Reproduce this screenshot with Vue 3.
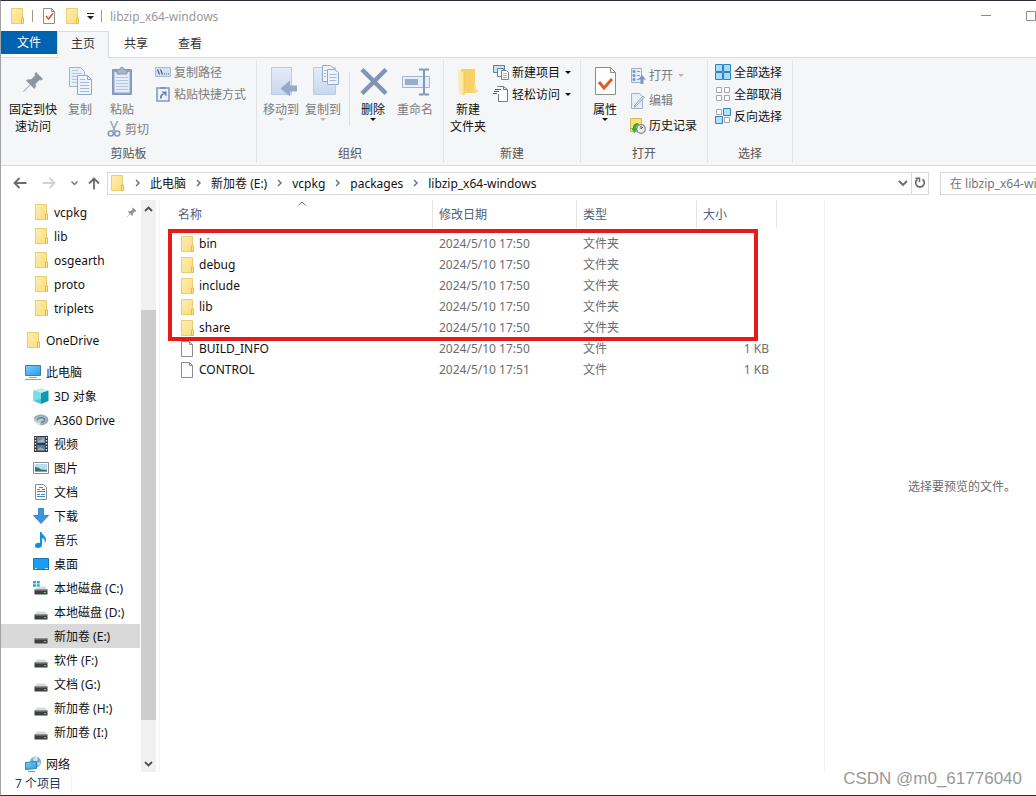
<template>
  <svg class="sprite" aria-hidden="true">
    <defs>
      <linearGradient id="g-folder" x1="0" y1="0" x2="1" y2="1">
        <stop offset="0" stop-color="#ffeeb0" />
        <stop offset="1" stop-color="#fbdc7c" />
      </linearGradient>
      <linearGradient id="g-blue" x1="0" y1="0" x2="1" y2="1">
        <stop offset="0" stop-color="#7cd0fb" />
        <stop offset="1" stop-color="#1e9bf0" />
      </linearGradient>
      <linearGradient id="g-pale" x1="0" y1="0" x2="0" y2="1">
        <stop offset="0" stop-color="#e3ecf8" />
        <stop offset="1" stop-color="#c8d7ee" />
      </linearGradient>
    </defs>

    <symbol id="folder" viewBox="0 0 16 16">
      <path d="M2.500.5h11v15h-11z" fill="url(#g-folder)" stroke="#e8cd72" />
      <path d="M12.500 15.500v-5.500h2v5.500z" fill="#ffe48c" stroke="#e3bd4a" />
    </symbol>
    <symbol id="file" viewBox="0 0 16 16">
      <path d="M2.500.5h8l3 3v12h-11z" fill="#fcfcfc" stroke="#8d8d8d" />
      <path d="M10.500.5v3h3" fill="none" stroke="#8d8d8d" />
    </symbol>
    <symbol id="check-file" viewBox="0 0 16 16">
      <path d="M2.500.5h8l3 3v12h-11z" fill="#fff" stroke="#8d8d8d" />
      <path d="M10.500.5v3h3" fill="none" stroke="#8d8d8d" />
      <path d="M5 8l2.500 3L12 5.500" fill="none" stroke="#dd5a25" stroke-width="1.700" />
    </symbol>
    <symbol id="pin" viewBox="0 0 22 22">
      <path d="M14 1l7 7-2 1.500-1.500-.5-4 4c.7 2 .2 3.500-1 5L8.500 14 2 20.500.800 21.200 1.500 20 8 13.500 4 9.500c1.500-1.200 3-1.700 5-1l4-4-.5-1.500z" fill="#8d959e" />
    </symbol>

    <symbol id="copy" viewBox="0 0 32 32">
      <path d="M5.500 2.500h11l4 4v15h-15z" fill="#e6eefa" stroke="#9fb3d1" />
      <path d="M8 8.500h10M8 11.500h10M8 14.500h10M8 17.500h10M8 5.500h6" stroke="#b4c5de" />
      <path d="M13.500 10.500h10l4 4v15h-14z" fill="#edf3fc" stroke="#93a9ca" />
      <path d="M23.500 10.500v4h4" fill="none" stroke="#93a9ca" />
      <path d="M16 14.500h5M16 17.500h9M16 20.500h9M16 23.500h9M16 26.500h9" stroke="#a6bad8" />
    </symbol>
    <symbol id="paste" viewBox="0 0 32 32">
      <path d="M6.500 4.500h19v25h-19z" fill="#8ca2c5" stroke="#8297bb" />
      <path d="M8.500 7h15v20.500h-15z" fill="#e3ecf9" />
      <path d="M11 9V4.500h3c0-3 4-3 4 0h3V9z" fill="#a9b6ca" stroke="#8593aa" />
      <path d="M10 12.500h12M10 15.500h12M10 18.500h12M10 21.500h12M10 24.500h12" stroke="#b6c6df" />
    </symbol>
    <symbol id="cut" viewBox="0 0 16 16">
      <path d="M4.500 0l4.500 10M11.500 0L7 10" fill="none" stroke="#a4aebd" stroke-width="1.800" />
      <circle cx="4.800" cy="12.500" r="2.500" fill="none" stroke="#8299c1" stroke-width="1.600" />
      <circle cx="11.200" cy="12.500" r="2.500" fill="none" stroke="#8299c1" stroke-width="1.600" />
    </symbol>
    <symbol id="path" viewBox="0 0 16 16">
      <path d="M.5 3.500h15v9H.5z" fill="#d5e1f2" stroke="#a9bbd6" />
      <path d="M2.500 5.500l2 5M5.500 5.500l2 5M9 10h1M11 10h1M13 10h1" stroke="#4e6285" stroke-width="1.200" />
    </symbol>
    <symbol id="shortcut" viewBox="0 0 16 16">
      <path d="M2 2h12v13H2z" fill="#edf3fc" stroke="#8599bd" stroke-width="1.600" />
      <path d="M5 3V1h6v2z" fill="#8599bd" />
      <path d="M6 12.500c-.5-2.500.5-4 2.500-4.500" fill="none" stroke="#667eaa" stroke-width="1.800" />
      <path d="M6.500 5.500h5v5z" fill="#667eaa" />
    </symbol>
    <symbol id="move-to" viewBox="0 0 32 32">
      <path d="M6.500 2.500h20v27h-20z" fill="url(#g-pale)" stroke="#bccbe4" />
      <path d="M32 20.500h-7v-5l-9.500 8 9.500 8v-5h7z" fill="#97a9c8" />
    </symbol>
    <symbol id="copy-to" viewBox="0 0 32 32">
      <path d="M6.500 2.500h22v27h-22z" fill="url(#g-pale)" stroke="#bccbe4" />
      <path d="M15.500.5h8l4 3v13h-12z" fill="#eef4fd" stroke="#93a9ca" />
      <path d="M20.500 4.500h7l4 3v12h-11z" fill="#eef4fd" stroke="#93a9ca" />
      <path d="M22.500 9.500h7M22.500 12.500h7M22.500 15.500h7M17 5.500h3M17 8.500h2M17 11.500h2" stroke="#a6bad8" />
    </symbol>
    <symbol id="delete" viewBox="0 0 32 32">
      <path d="M5 4.500l24 24M29 4.500l-24 24" stroke="#8094b4" stroke-width="4.500" />
    </symbol>
    <symbol id="rename" viewBox="0 0 32 32">
      <path d="M3.500 11.500h27v11h-27z" fill="#e7effa" stroke="#a2b4d1" />
      <path d="M6 14h13v6H6z" fill="#9babc8" />
      <path d="M20 4.500h3.500q1.500 0 1.500 2 0-2 1.500-2H30M20 29.500h3.500q1.500 0 1.500-2 0 2 1.500 2H30M25 6v22" fill="none" stroke="#8297b9" stroke-width="2" />
    </symbol>
    <symbol id="new-folder" viewBox="0 0 32 32">
      <path d="M9 4h14v18l1 6H9z" fill="#f7d267" />
      <path d="M22 20h2v3l3 4h-5z" fill="#fbdf8b" />
      <path d="M6 4l6 4v23l-5-2z" fill="#ffe9a6" />
      <path d="M12 8v22" stroke="#edc75c" />
    </symbol>
    <symbol id="new-item" viewBox="0 0 16 16">
      <path d="M.5 1.500h11v7H.5z" fill="#c7e4f7" stroke="#4b84ac" />
      <path d="M4.500 4.500h6v8h-6z" fill="#f7fafc" stroke="#75818c" />
      <path d="M8.500 6.500h5l2 2v7h-7z" fill="#fff" stroke="#75818c" />
      <path d="M10 9.500h4M10 11.500h4M10 13.500h4" stroke="#c3a4a9" />
    </symbol>
    <symbol id="easy" viewBox="0 0 16 16">
      <path d="M4.500.5h6l4 3v12h-9V8" fill="#fff" stroke="#7a7a7a" />
      <path d="M10.500.5v3h4" fill="none" stroke="#7a7a7a" />
      <path d="M2 3.500h6M1 5.500h5M0 7.500h4" stroke="#2d6690" stroke-width="1.200" />
    </symbol>
    <symbol id="properties" viewBox="0 0 32 32">
      <path d="M6.500 2.500h15l5 5v22h-20z" fill="#fff" stroke="#8c8c8c" />
      <path d="M21.500 2.500v5h5" fill="none" stroke="#8c8c8c" />
      <path d="M10 17l5 6 8-9" fill="none" stroke="#dd5c25" stroke-width="3" />
    </symbol>
    <symbol id="open" viewBox="0 0 16 16">
      <path d="M1.500.5h10v14h-10z" fill="#e5eefa" stroke="#9fb0cc" />
      <path d="M3 2.500h2v2H3zM3 6.500h2v2H3zM3 10.500h2v2H3zM7 3.500h3M7 7.500h3M7 11.500h2" fill="#8499bd" stroke="#8499bd" />
      <path d="M12 7l4 4.500h-2.500V16h-3v-4.500H8z" fill="#8197ba" />
    </symbol>
    <symbol id="edit" viewBox="0 0 16 16">
      <path d="M1.500.5h8l3 3v12h-11z" fill="#e5eefa" stroke="#9fb3d1" />
      <path d="M14 4.500L6 13l-1.500 1.500.5-2.500L13 3z" fill="#edf3fc" stroke="#8ca2c5" />
    </symbol>
    <symbol id="history" viewBox="0 0 16 16">
      <path d="M.5.5h11v13H.5z" fill="#fbe07e" stroke="#d9b84c" />
      <path d="M8 5c-4 0-5 2.500-5 5H1l3.500 5L8 10H6c0-2 1-3 3-3z" fill="#2fae3a" />
      <circle cx="11" cy="11" r="4.300" fill="#e8e8e8" stroke="#858585" stroke-width="1.200" />
      <path d="M11 8v3l2-2" fill="none" stroke="#555" />
    </symbol>
    <symbol id="select-all" viewBox="0 0 16 16">
      <path d="M.5.5h7v7h-7zM8.500.5h7v7h-7zM.5 8.500h7v7h-7zM8.500 8.500h7v7h-7z" fill="#a9dcf9" stroke="#2b83c4" />
    </symbol>
    <symbol id="select-none" viewBox="0 0 16 16">
      <path d="M1.500 1.500h5v5h-5zM9.500 1.500h5v5h-5zM1.500 9.500h5v5h-5zM9.500 9.500h5v5h-5z" fill="#fff" stroke="#a5a5a5" />
    </symbol>
    <symbol id="select-invert" viewBox="0 0 16 16">
      <path d="M1.500 1.500h5v5h-5zM9.500 9.500h5v5h-5z" fill="#fff" stroke="#a5a5a5" />
      <path d="M8.500.5h7v7h-7zM.5 8.500h7v7h-7z" fill="#b5e0fa" stroke="#2b83c4" />
    </symbol>

    <symbol id="pc" viewBox="0 0 16 16">
      <path d="M.5 1.500h15v10H.5z" fill="url(#g-blue)" stroke="#3d7ba8" />
      <path d="M4 13.500h8M0 15.500h16" stroke="#8ba0b0" />
    </symbol>
    <symbol id="cube" viewBox="0 0 16 16">
      <path d="M8 0l7.500 2.500L8 5 .5 2.500z" fill="#bdeef4" />
      <path d="M.5 2.500L8 5v11L.5 13z" fill="#4bc5d8" />
      <path d="M15.500 2.500L8 5v11l7.500-3z" fill="#0f97b5" />
      <path d="M.5 2.500L8 5v6L.5 13z" fill="#7fdbe7" />
    </symbol>
    <symbol id="a360" viewBox="0 0 16 16">
      <ellipse cx="8" cy="8" rx="7" ry="5" fill="#b9cbd6" />
      <path d="M1.500 6.500c2-3.500 9-4.500 12-1 2.500 3.500-1 7-6 7" fill="none" stroke="#8fa9b8" stroke-width="1.800" />
      <path d="M4 8c1.500-2.500 6-3 7.500-1 1 2-1.500 3.500-3.500 3.200" fill="none" stroke="#64818f" stroke-width="1.600" />
      <path d="M1 9c1.500 2.500 4 2.500 6 2" fill="none" stroke="#e8f0f4" stroke-width="1.200" />
    </symbol>
    <symbol id="video" viewBox="0 0 16 16">
      <path d="M1 0h14v16H1z" fill="#3a3a3a" />
      <path d="M2.500 1v15M13.500 1v15" stroke="#e5e5e5" stroke-width="1.400" stroke-dasharray="1.500 1.500" />
      <path d="M4 1h8v6H4z" fill="#5c8fd0" />
      <path d="M5 5l3-1 3-2v4H5z" fill="#d9b04b" />
      <path d="M4 9h8v6H4z" fill="#4779bd" />
      <path d="M5 13l2-2 4 2v1H5z" fill="#c8a33c" />
    </symbol>
    <symbol id="picture" viewBox="0 0 16 16">
      <path d="M.5 2.500h15v11H.5z" fill="#fff" stroke="#909090" />
      <path d="M2 4h12v8H2z" fill="#b6def2" />
      <path d="M2 7q4 0 6 2.500l6 .5v2H2z" fill="#3f7068" />
      <path d="M2 11h12v1H2z" fill="#78a7c2" />
    </symbol>
    <symbol id="document" viewBox="0 0 16 16">
      <path d="M2.500.5h8l3 3v12h-11z" fill="#fff" stroke="#8d8d8d" />
      <path d="M4 5.500h3M4 7.500h8M4 10.500h3M4 12.500h8M8 10.500h4M6 3.500h4M9 5.500h3" stroke="#3f8ac4" stroke-width="1.200" />
    </symbol>
    <symbol id="download" viewBox="0 0 16 16">
      <path d="M5.500.5h5v7h5L8 15.500.5 7.500h5z" fill="#3c94e0" stroke="#2477bd" stroke-width=".8" />
    </symbol>
    <symbol id="music" viewBox="0 0 16 16">
      <path d="M7 0h1.500c.5 3 4.500 4 4.500 7.500 0 1.500-.5 2.500-1.200 3.500.5-3-1-4.500-2.800-5v7c0 2-2 3-4 3s-3-1-3-2.300C2 11.500 4.500 10 7 11z" fill="#0f8fe0" />
    </symbol>
    <symbol id="desktop" viewBox="0 0 16 16">
      <path d="M.5 2.500h15v11H.5z" fill="#1a9df2" stroke="#1374b8" />
      <path d="M2 12.500h2M12 12.500h3" stroke="#cfeafc" />
    </symbol>
    <symbol id="drive" viewBox="0 0 16 16">
      <path d="M4 7.500h8l2.500 3h-13z" fill="#d9dadc" />
      <path d="M1.500 10.500h13v5h-13z" fill="#3c3f42" />
      <path d="M1.500 10.500h13v1h-13z" fill="#8d9094" />
      <path d="M11 13h2v1h-2z" fill="#4ee04e" />
    </symbol>
    <symbol id="drive-c" viewBox="0 0 16 16">
      <path d="M0 1h3v2.500H0zM3.800 1h3v2.500h-3zM0 4.300h3v2.500H0zM3.800 4.300h3v2.500h-3z" fill="#1faee0" />
      <path d="M6 6.500h6l2.500 3h-13z" fill="#d9dadc" />
      <path d="M1.500 9.500h13v5h-13z" fill="#3c3f42" />
      <path d="M1.500 9.500h13v1h-13z" fill="#8d9094" />
      <path d="M11 12h2v1h-2z" fill="#4ee04e" />
    </symbol>
    <symbol id="network" viewBox="0 0 16 16">
      <circle cx="10.500" cy="6" r="5.500" fill="#76aed0" />
      <path d="M8 2q3-2 5 0l-1 3-3 1zM12 7l3-1-1 4z" fill="#c9e3f0" />
      <path d="M.5 6.500l11-1v7l-11 1z" fill="url(#g-blue)" stroke="#3b80b3" />
      <path d="M3 15.500h7" stroke="#7c98ab" />
    </symbol>
  </svg>

  <div class="window">
    <header class="title-bar">
      <svg class="icon"><use href="#folder" /></svg>
      <span class="bar-line"></span>
      <button class="quick" aria-label="属性"><svg class="icon"><use href="#check-file" /></svg></button>
      <button class="quick" aria-label="新建文件夹"><svg class="icon"><use href="#folder" /></svg></button>
      <button class="quick more" aria-label="自定义快速访问工具栏">
        <svg width="7" height="7" viewBox="0 0 7 7"><path d="M0 .5h7" stroke="#222" /><path d="M0 3h7L3.500 6.500z" fill="#222" /></svg>
      </button>
      <span class="bar-line"></span>
      <h1 class="title">libzip_x64-windows</h1>
      <button class="win-btn min" aria-label="最小化">
        <svg width="10" height="10" viewBox="0 0 10 10"><path d="M0 4.500h10" stroke="#8c8c8c" /></svg>
      </button>
      <button class="win-btn" aria-label="最大化">
        <svg width="10" height="10" viewBox="0 0 10 10"><path d="M.5.5h9v9h-9z" fill="none" stroke="#8c8c8c" /></svg>
      </button>
    </header>

    <nav class="tabs">
      <button class="tab tab-file">文件</button>
      <button class="tab tab-active">主页</button>
      <button class="tab">共享</button>
      <button class="tab">查看</button>
    </nav>

    <section class="ribbon">
      <div class="group" v-for="group in groups" :key="group.name" :class="group.cls">
        <div class="group-body">
          <template v-for="(part, i) in group.parts" :key="i">
            <span class="group-line" v-if="part.line"></span>
            <div class="column" v-else>
              <button
                class="big"
                v-if="part.big"
                :class="{ wide: part.wide, narrow: part.narrow, off: part.off }"
              >
                <svg class="icon-pin" v-if="part.big === 'pin'"><use href="#pin" /></svg>
                <svg class="icon-big" v-else><use :href="'#' + part.big" /></svg>
                <span v-for="line in part.lines" :key="line">{{ line }}</span>
                <i class="arrow" v-if="part.arrow"></i>
              </button>
              <div class="smalls" v-if="part.smalls" :class="part.cls">
                <button
                  class="small"
                  v-for="item in part.smalls"
                  :key="item.text"
                  :class="{ off: item.off }"
                >
                  <svg class="icon"><use :href="'#' + item.icon" /></svg>
                  <span>{{ item.text }}</span>
                  <i class="arrow" v-if="item.arrow"></i>
                </button>
              </div>
            </div>
          </template>
        </div>
        <div class="group-name">{{ group.name }}</div>
      </div>
    </section>

    <div class="nav-bar">
      <button class="nav-btn" aria-label="返回">
        <svg width="14" height="12" viewBox="0 0 14 12"><path d="M13.500 6H1.500M6.500 1l-5 5 5 5" fill="none" stroke="#6b6b6b" stroke-width="1.800" /></svg>
      </button>
      <button class="nav-btn" aria-label="前进">
        <svg width="14" height="12" viewBox="0 0 14 12"><path d="M.5 6h12M7.500 1l5 5-5 5" fill="none" stroke="#d2d2d2" stroke-width="1.800" /></svg>
      </button>
      <button class="nav-btn recent" aria-label="最近浏览的位置">
        <svg width="7" height="5" viewBox="0 0 7 5"><path d="M.5.5l3 3 3-3" fill="none" stroke="#777" stroke-width="1.500" /></svg>
      </button>
      <button class="nav-btn up" aria-label="上移">
        <svg width="12" height="13" viewBox="0 0 12 13"><path d="M6 12.500v-11M1 6.500l5-5 5 5" fill="none" stroke="#6b6b6b" stroke-width="1.800" /></svg>
      </button>
      <div class="address">
        <svg class="icon"><use href="#folder" /></svg>
        <template v-for="crumb in crumbs" :key="crumb">
          <svg class="crumb-arrow" viewBox="0 0 25 8"><path d="M11 1l3 3-3 3" fill="none" stroke="#6b6b6b" stroke-width="1.400" /></svg>
          <a class="crumb" href="#">{{ crumb }}</a>
        </template>
        <button class="address-drop" aria-label="以前的位置">
          <svg width="10" height="7" viewBox="0 0 10 7"><path d="M1 1l4 4 4-4" fill="none" stroke="#6b6b6b" stroke-width="1.900" /></svg>
        </button>
        <button class="refresh" aria-label="刷新">
          <svg width="12" height="12" viewBox="0 0 12 12">
            <path d="M3.500 2.300A4.300 4.300 0 1 0 8.500 2.300" fill="none" stroke="#6b6b6b" stroke-width="1.700" />
            <path d="M1.500 1.300h4v4" fill="none" stroke="#6b6b6b" stroke-width="1.500" />
          </svg>
        </button>
      </div>
      <input class="search" type="text" aria-label="搜索" placeholder="在 libzip_x64-windows 中搜索" />
    </div>

    <main class="content">
      <aside class="side">
        <ul class="tree">
          <li
            class="tree-item"
            v-for="item in tree"
            :key="item.text"
            :class="{ root: item.root, selected: item.selected }"
          >
            <svg class="icon"><use :href="'#' + item.icon" /></svg>
            <span>{{ item.text }}</span>
            <svg class="tree-pin" v-if="item.pinned"><use href="#pin" /></svg>
          </li>
        </ul>
        <div class="scrollbar">
          <svg class="scroll-arrow" viewBox="0 0 15 18"><path d="M4 11l3.500-3.500L11 11" fill="none" stroke="#505050" stroke-width="1.800" /></svg>
          <span class="track-top"></span>
          <span class="thumb"></span>
          <span class="track-bottom"></span>
          <svg class="scroll-arrow" viewBox="0 0 15 18"><path d="M4 8l3.500 3.500L11 8" fill="none" stroke="#505050" stroke-width="1.800" /></svg>
        </div>
      </aside>

      <div class="list">
        <svg class="sort" viewBox="0 0 8 5"><path d="M.5 4.500L4 1l3.500 3.500" fill="none" stroke="#777" /></svg>
        <table class="files">
          <thead>
            <tr>
              <th class="col-name">名称</th>
              <th class="col-date">修改日期</th>
              <th class="col-type">类型</th>
              <th class="col-size">大小</th>
            </tr>
          </thead>
          <tbody>
            <tr v-for="file in files" :key="file.name">
              <td class="name">
                <div class="name-cell">
                  <svg class="icon"><use :href="file.size ? '#file' : '#folder'" /></svg>
                  <span>{{ file.name }}</span>
                </div>
              </td>
              <td>{{ file.date }}</td>
              <td>{{ file.size ? '文件' : '文件夹' }}</td>
              <td class="size">{{ file.size }}</td>
            </tr>
          </tbody>
        </table>
        <div class="mark"></div>
      </div>

      <aside class="preview">选择要预览的文件。</aside>
    </main>

    <footer class="status">
      <span class="count">7 个项目</span>
    </footer>
    <div class="watermark">CSDN @m0_61776040</div>
  </div>
</template>

<script setup>
const groups = [
  {
    name: '剪贴板',
    cls: 'g-clipboard',
    parts: [
      { big: 'pin', lines: ['固定到快', '速访问'], wide: true },
      { big: 'copy', lines: ['复制'], narrow: true, off: true },
      {
        big: 'paste',
        lines: ['粘贴'],
        off: true,
        cls: 'under',
        smalls: [{ icon: 'cut', text: '剪切', off: true }],
      },
      {
        smalls: [
          { icon: 'path', text: '复制路径', off: true },
          { icon: 'shortcut', text: '粘贴快捷方式', off: true },
        ],
      },
    ],
  },
  {
    name: '组织',
    cls: 'g-organize',
    parts: [
      { big: 'move-to', lines: ['移动到'], off: true, arrow: true },
      { big: 'copy-to', lines: ['复制到'], off: true, arrow: true },
      { line: true },
      { big: 'delete', lines: ['删除'], arrow: true },
      { big: 'rename', lines: ['重命名'], off: true },
    ],
  },
  {
    name: '新建',
    cls: 'g-new',
    parts: [
      { big: 'new-folder', lines: ['新建', '文件夹'] },
      {
        smalls: [
          { icon: 'new-item', text: '新建项目', arrow: true },
          { icon: 'easy', text: '轻松访问', arrow: true },
        ],
      },
    ],
  },
  {
    name: '打开',
    cls: 'g-open',
    parts: [
      { big: 'properties', lines: ['属性'], arrow: true },
      {
        cls: 'tall',
        smalls: [
          { icon: 'open', text: '打开', off: true, arrow: true },
          { icon: 'edit', text: '编辑', off: true },
          { icon: 'history', text: '历史记录' },
        ],
      },
    ],
  },
  {
    name: '选择',
    cls: 'g-select',
    parts: [
      {
        smalls: [
          { icon: 'select-all', text: '全部选择' },
          { icon: 'select-none', text: '全部取消' },
          { icon: 'select-invert', text: '反向选择' },
        ],
      },
    ],
  },
];

const crumbs = ['此电脑', '新加卷 (E:)', 'vcpkg', 'packages', 'libzip_x64-windows'];

const tree = [
  { icon: 'folder', text: 'vcpkg', pinned: true },
  { icon: 'folder', text: 'lib' },
  { icon: 'folder', text: 'osgearth' },
  { icon: 'folder', text: 'proto' },
  { icon: 'folder', text: 'triplets' },
  { icon: 'folder', text: 'OneDrive', root: true },
  { icon: 'pc', text: '此电脑', root: true },
  { icon: 'cube', text: '3D 对象' },
  { icon: 'a360', text: 'A360 Drive' },
  { icon: 'video', text: '视频' },
  { icon: 'picture', text: '图片' },
  { icon: 'document', text: '文档' },
  { icon: 'download', text: '下载' },
  { icon: 'music', text: '音乐' },
  { icon: 'desktop', text: '桌面' },
  { icon: 'drive-c', text: '本地磁盘 (C:)' },
  { icon: 'drive', text: '本地磁盘 (D:)' },
  { icon: 'drive', text: '新加卷 (E:)', selected: true },
  { icon: 'drive', text: '软件 (F:)' },
  { icon: 'drive', text: '文档 (G:)' },
  { icon: 'drive', text: '新加卷 (H:)' },
  { icon: 'drive', text: '新加卷 (I:)' },
  { icon: 'network', text: '网络', root: true },
];

const files = [
  { name: 'bin', date: '2024/5/10 17:50' },
  { name: 'debug', date: '2024/5/10 17:50' },
  { name: 'include', date: '2024/5/10 17:50' },
  { name: 'lib', date: '2024/5/10 17:50' },
  { name: 'share', date: '2024/5/10 17:50' },
  { name: 'BUILD_INFO', date: '2024/5/10 17:50', size: '1 KB' },
  { name: 'CONTROL', date: '2024/5/10 17:51', size: '1 KB' },
];
</script>

<style>
body {
  margin: 0;
}
</style>

<style scoped>
.sprite {
  position: absolute;
  width: 0;
  height: 0;
}

.window {
  position: relative;
  box-sizing: border-box;
  display: flex;
  flex-direction: column;
  height: 100vh;
  overflow: hidden;
  border: 1px solid #2e2e36;
  border-left-color: #a3a3a3;
  border-right: none;
  font-family: "Noto Sans", "Noto Sans CJK SC", sans-serif;
  font-size: 12px;
  line-height: 17px;
  color: #111;
  background: #fff;
}

button {
  padding: 0;
  border: none;
  font: inherit;
  color: inherit;
  background: none;
}

.icon {
  flex: none;
  display: block;
  width: 16px;
  height: 16px;
}

/* title bar */
.title-bar {
  flex: none;
  display: flex;
  align-items: center;
  height: 30px;
  padding-left: 8px;
}

.bar-line {
  width: 1px;
  height: 12px;
  margin: 0 8px 0 7px;
  background: #9a9a9a;
}

.quick {
  display: flex;
  margin-right: 7px;
}

.quick.more {
  margin-right: 0;
}

.title {
  flex: 1;
  margin: 0;
  font-size: 12px;
  font-weight: 400;
  color: #999;
}

.win-btn {
  display: flex;
}

.win-btn.min {
  margin-right: 35px;
}

/* tabs */
.tabs {
  flex: none;
  display: flex;
  height: 26px;
}

.tab {
  width: 54px;
  height: 24px;
  color: #333;
}

.tab-file {
  width: 56px;
  height: 23px;
  color: #fff;
  background: #0063b1;
}

.tab-active {
  position: relative;
  box-sizing: border-box;
  width: 52px;
  height: 27px;
  padding-bottom: 3px;
  border: 1px solid #dadbdc;
  border-bottom: none;
  background: #f5f6f7;
}

/* ribbon */
.ribbon {
  flex: none;
  display: flex;
  height: 107px;
  border-top: 1px solid #dadbdc;
  border-bottom: 1px solid #dadbdc;
  background: #f4f6f8;
}

.group {
  box-sizing: border-box;
  display: flex;
  flex-direction: column;
  justify-content: space-between;
  margin: 2px 0;
  border-right: 1px solid #e1e3e5;
}

.g-clipboard {
  width: 256px;
}

.g-organize {
  width: 187px;
}

.g-new {
  width: 137px;
}

.g-open {
  width: 127px;
}

.g-select {
  width: 85px;
}

.group-body {
  display: flex;
  padding-left: 2px;
}

.g-clipboard .group-body {
  padding-left: 4px;
}

.g-organize .group-body {
  padding-left: 3px;
}

.g-select .group-body {
  padding-left: 7px;
}

.group-name {
  line-height: 18px;
  text-align: center;
  color: #555;
}

.group-line {
  width: 1px;
  height: 54px;
  margin: 12px 2px 0 5px;
  background: #dcdfe2;
}

.big {
  display: flex;
  flex-direction: column;
  align-items: center;
  width: 44px;
  padding-top: 5px;
}

.g-clipboard .big {
  width: 46px;
}

.g-organize .big {
  width: 42px;
}

.g-clipboard .big.wide {
  width: 56px;
}

.g-clipboard .big.narrow {
  width: 38px;
}

.icon-big {
  width: 32px;
  height: 32px;
  margin-bottom: 4px;
}

.icon-pin {
  width: 22px;
  height: 22px;
  margin: 6px 0 8px;
}

.off {
  color: #7c7c7c;
}

.arrow {
  border: 3px solid transparent;
  border-top-color: currentColor;
  border-bottom: none;
}

.off .arrow {
  border-top-color: #b5b5b5;
}

.smalls {
  padding: 1px 0 0 6px;
}

.g-new .smalls,
.g-open .smalls {
  padding-left: 3px;
}

.g-select .smalls {
  padding-left: 0;
}

.smalls.under {
  padding: 0 0 0 7px;
}

.smalls.tall {
  padding-top: 3px;
}

.small {
  display: flex;
  align-items: center;
  gap: 3px;
  height: 22px;
  white-space: nowrap;
}

.small .arrow {
  margin-left: 2px;
}

.tall .small {
  height: 25px;
}

/* address row */
.nav-bar {
  flex: none;
  display: flex;
  align-items: center;
  height: 34px;
  padding-left: 12px;
}

.nav-btn {
  display: flex;
  margin-right: 15px;
}

.nav-btn.recent {
  margin-right: 10px;
}

.nav-btn.up {
  margin-right: 7px;
}

.address {
  box-sizing: border-box;
  flex: 1;
  display: flex;
  align-items: center;
  height: 23px;
  margin-right: 11px;
  padding-left: 1px;
  border: 1px solid #d9d9d9;
}

.crumb-arrow {
  width: 25px;
  height: 8px;
}

.crumb {
  color: #111;
  text-decoration: none;
  white-space: nowrap;
}

.address-drop {
  display: flex;
  margin-left: auto;
  padding-right: 3px;
}

.refresh {
  display: flex;
  align-items: center;
  justify-content: center;
  width: 17px;
  height: 21px;
  border-left: 1px solid #d9d9d9;
}

.search {
  box-sizing: border-box;
  width: 96px;
  height: 23px;
  padding: 0 0 0 9px;
  border: 1px solid #d9d9d9;
  border-right: none;
  border-radius: 0;
  font: inherit;
}

.search::placeholder {
  color: #757575;
}

/* content */
.content {
  flex: 1;
  display: flex;
  min-height: 0;
}

.side {
  flex: none;
  display: flex;
  width: 158px;
  border-right: 1px solid #f2f2f2;
}

.tree {
  flex: 1;
  margin: 0;
  padding: 0;
  overflow: hidden;
  list-style: none;
}

.tree-item {
  display: flex;
  align-items: center;
  gap: 5px;
  height: 24px;
  padding-left: 32px;
  white-space: nowrap;
}

.tree-item.root {
  margin-top: 8px;
  padding-left: 24px;
}

.tree-item.selected {
  background: #d9d9d9;
}

.tree-pin {
  width: 11px;
  height: 11px;
  margin: 0 3px 0 auto;
}

.scrollbar {
  display: flex;
  flex-direction: column;
  width: 15px;
  margin: 0 3px 0 1px;
  background: #f0f0f0;
}

.scroll-arrow {
  width: 15px;
  height: 18px;
}

.track-top {
  flex: 92;
}

.thumb {
  flex: 409;
  background: #cdcdcd;
}

.track-bottom {
  flex: 34;
}

.list {
  position: relative;
  flex: 1;
}

.sort {
  position: absolute;
  top: 1px;
  left: 138px;
  width: 8px;
  height: 5px;
}

.files {
  width: 617px;
  table-layout: fixed;
  border-collapse: separate;
  border-spacing: 0;
  color: #6d6d6d;
}

.files tbody::before {
  content: '';
  display: block;
  height: 5px;
}

.files th {
  box-sizing: border-box;
  height: 28px;
  padding: 1px 0 0 6px;
  border-right: 1px solid #e5e5e5;
  font-weight: 400;
  text-align: left;
  color: #4c607a;
}

.files th.col-name {
  width: 273px;
  padding-left: 18px;
}

.col-date {
  width: 144px;
}

.col-type {
  width: 120px;
}

.files td {
  height: 21px;
  padding: 0 0 0 6px;
}

.files td.name {
  padding-left: 19px;
  color: #111;
}

.name-cell {
  display: flex;
  align-items: center;
  gap: 4px;
}

.files td.size {
  padding-right: 8px;
  text-align: right;
}

.mark {
  position: absolute;
  top: 29px;
  left: 8px;
  box-sizing: border-box;
  width: 590px;
  height: 112px;
  border: 4px solid #e81919;
}

.preview {
  box-sizing: border-box;
  display: flex;
  align-items: center;
  width: 212px;
  padding-left: 83px;
  border-left: 1px solid #f2f2f2;
  white-space: nowrap;
  color: #6d6d6d;
}

.status {
  flex: none;
  display: flex;
  align-items: center;
  height: 23px;
  padding-left: 14px;
  color: #1e395b;
}

.count {
  padding-right: 10px;
  border-right: 1px solid #efefef;
}

.watermark {
  position: absolute;
  right: 14px;
  bottom: 6px;
  font-family: "Liberation Sans", Arial, sans-serif;
  font-size: 17px;
  line-height: 20px;
  color: #999;
}
</style>
